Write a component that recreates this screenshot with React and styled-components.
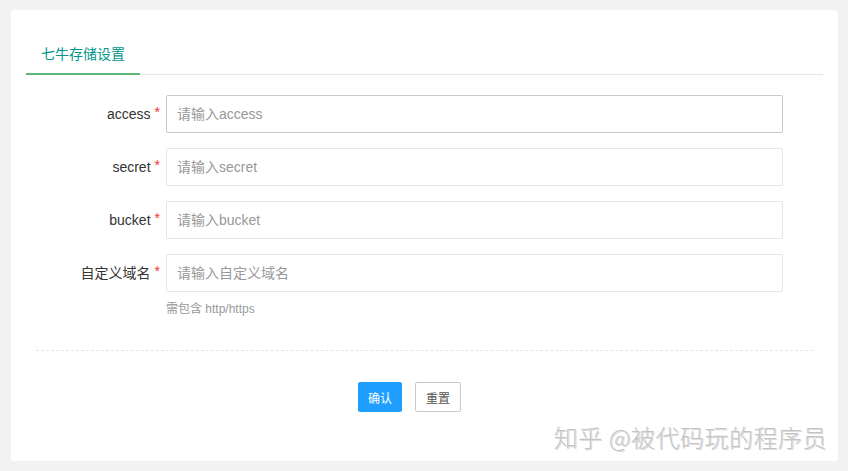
import React from 'react';
import styled, { createGlobalStyle } from 'styled-components';

const GlobalStyle = createGlobalStyle`
  html, body {
    margin: 0;
    padding: 0;
    background: #f2f2f2;
  }
  body {
    font-family: "Liberation Sans", "Noto Sans CJK SC", sans-serif;
    color: #333;
  }
  * { box-sizing: border-box; }
`;

const Page = styled.div`
  position: relative;
  width: 848px;
  height: 471px;
  padding: 10px 10px 10px 11px;
`;

const Card = styled.div`
  background: #fff;
  border-radius: 3px;
  height: 451px;
  width: 827px;
  padding: 25px 15px 15px;
`;

const TabBar = styled.div`
  display: flex;
  height: 40px;
  border-bottom: 1px solid #e6e6e6;
`;

const Tab = styled.div`
  padding: 0 15px;
  line-height: 38px;
  font-size: 14px;
  color: ${p => (p.active ? '#009688' : '#666')};
  border-bottom: 2px solid ${p => (p.active ? '#5fb878' : 'transparent')};
  margin-bottom: -1px;
  height: 40px;
`;

const Form = styled.form`
  display: flex;
  flex-direction: column;
  padding-top: 20px;
`;

const Row = styled.div`
  display: flex;
  align-items: flex-start;
  margin-bottom: ${p => (p.tight ? '0' : '15px')};
`;

const Label = styled.label`
  width: 140px;
  flex-shrink: 0;
  height: 38px;
  line-height: 38px;
  padding-right: 6px;
  text-align: right;
  font-size: 14px;
  color: #333;
`;

const Star = styled.span`
  color: #f5312b;
  margin-left: 4px;
  font-size: 14px;
  position: relative;
  top: -2px;
`;

const Field = styled.div`
  display: flex;
  flex-direction: column;
  width: 617px;
`;

const Input = styled.input`
  height: 38px;
  width: 100%;
  padding: 0 10px;
  border: 1px solid ${p => (p.focused ? '#c9c9c9' : '#e6e6e6')};
  border-radius: 2px;
  outline: none;
  font-family: "Liberation Sans", "Noto Sans CJK SC", sans-serif;
  font-size: 14px;
  color: #333;
  background: #fff;
  &::placeholder { color: #999; }
`;

const Hint = styled.div`
  margin-top: 9px;
  font-size: 12px;
  line-height: 16px;
  color: #999;
`;

const Divider = styled.hr`
  margin: 33px 10px 0;
  border: none;
  border-top: 1px dashed #e6e6e6;
  height: 0;
`;

const Actions = styled.div`
  display: flex;
  gap: 13px;
  padding-left: 332px;
  margin-top: 31px;
`;

const Button = styled.button`
  height: 30px;
  padding: 0;
  white-space: nowrap;
  font-size: 12px;
  font-family: "Noto Sans CJK SC", sans-serif;
  border-radius: 2px;
  cursor: pointer;
  border: 1px solid ${p => (p.primary ? '#1e9fff' : '#c9c9c9')};
  background: ${p => (p.primary ? '#1e9fff' : '#fff')};
  color: ${p => (p.primary ? '#fff' : '#555')};
  width: ${p => (p.primary ? '44px' : '46px')};
`;

const Watermark = styled.div`
  position: absolute;
  right: 21px;
  top: 421px;
  font-family: "Noto Sans CJK SC", sans-serif;
  font-size: 24px;
  font-weight: 300;
  line-height: 32px;
  color: #c4c4c4;
  letter-spacing: 0.5px;
  text-shadow: 0 0 1px #fff, 1px 1px 0 #d8d8d8;
  white-space: nowrap;
`;

const fields = [
  { label: 'access', placeholder: '请输入access', focused: true },
  { label: 'secret', placeholder: '请输入secret' },
  { label: 'bucket', placeholder: '请输入bucket' },
  { label: '自定义域名', placeholder: '请输入自定义域名', hint: '需包含 http/https' },
];

export default function App() {
  return (
    <>
      <GlobalStyle />
      <Page>
        <Card>
          <TabBar>
            <Tab active>七牛存储设置</Tab>
          </TabBar>
          <Form onSubmit={e => e.preventDefault()}>
            {fields.map((f, i) => (
              <Row key={f.label} tight={i === fields.length - 1}>
                <Label>
                  {f.label}
                  <Star>*</Star>
                </Label>
                <Field>
                  <Input placeholder={f.placeholder} focused={f.focused} />
                  {f.hint && <Hint>{f.hint}</Hint>}
                </Field>
              </Row>
            ))}
            <Divider />
            <Actions>
              <Button primary type="submit">确认</Button>
              <Button type="button">重置</Button>
            </Actions>
          </Form>
        </Card>
        <Watermark>知乎 @被代码玩的程序员</Watermark>
      </Page>
    </>
  );
}
